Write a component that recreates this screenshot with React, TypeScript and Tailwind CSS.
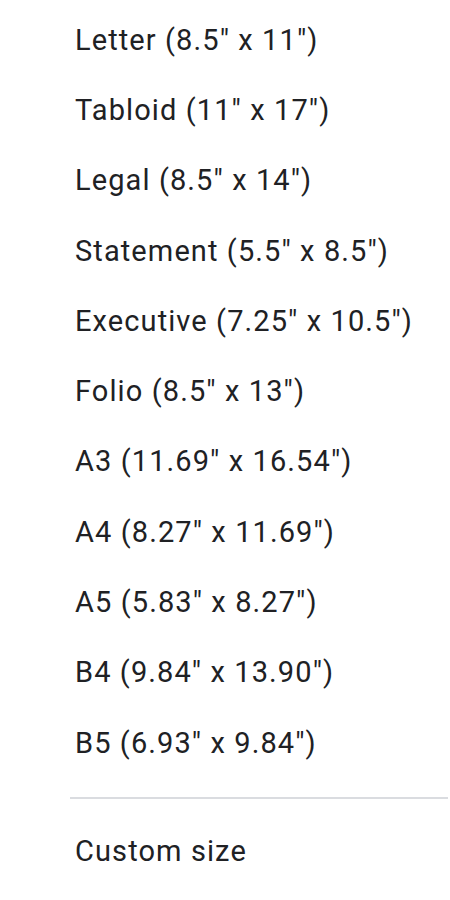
const sizes = [
  'Letter (8.5" x 11")',
  'Tabloid (11" x 17")',
  'Legal (8.5" x 14")',
  'Statement (5.5" x 8.5")',
  'Executive (7.25" x 10.5")',
  'Folio (8.5" x 13")',
  'A3 (11.69" x 16.54")',
  'A4 (8.27" x 11.69")',
  'A5 (5.83" x 8.27")',
  'B4 (9.84" x 13.90")',
  'B5 (6.93" x 9.84")',
];

export default function App() {
  return (
    <div className="w-[450px] h-[900px] bg-white text-[#202124] font-['Roboto',sans-serif] overflow-hidden">
      <div className="w-[448px] pt-[5px]">
        {sizes.map((s) => (
          <div key={s} className="h-[70.3px] flex items-center pl-[75px] text-[29px] leading-none tracking-[1.1px]">
            {s}
          </div>
        ))}
        <div className="ml-[70px] mt-[19px] h-[2px] bg-[#dadce0]"></div>
        <div className="mt-[17px] h-[70px] flex items-center pl-[75px] text-[29px] leading-none tracking-[1.1px]">
          Custom size
        </div>
      </div>
    </div>
  );
}
